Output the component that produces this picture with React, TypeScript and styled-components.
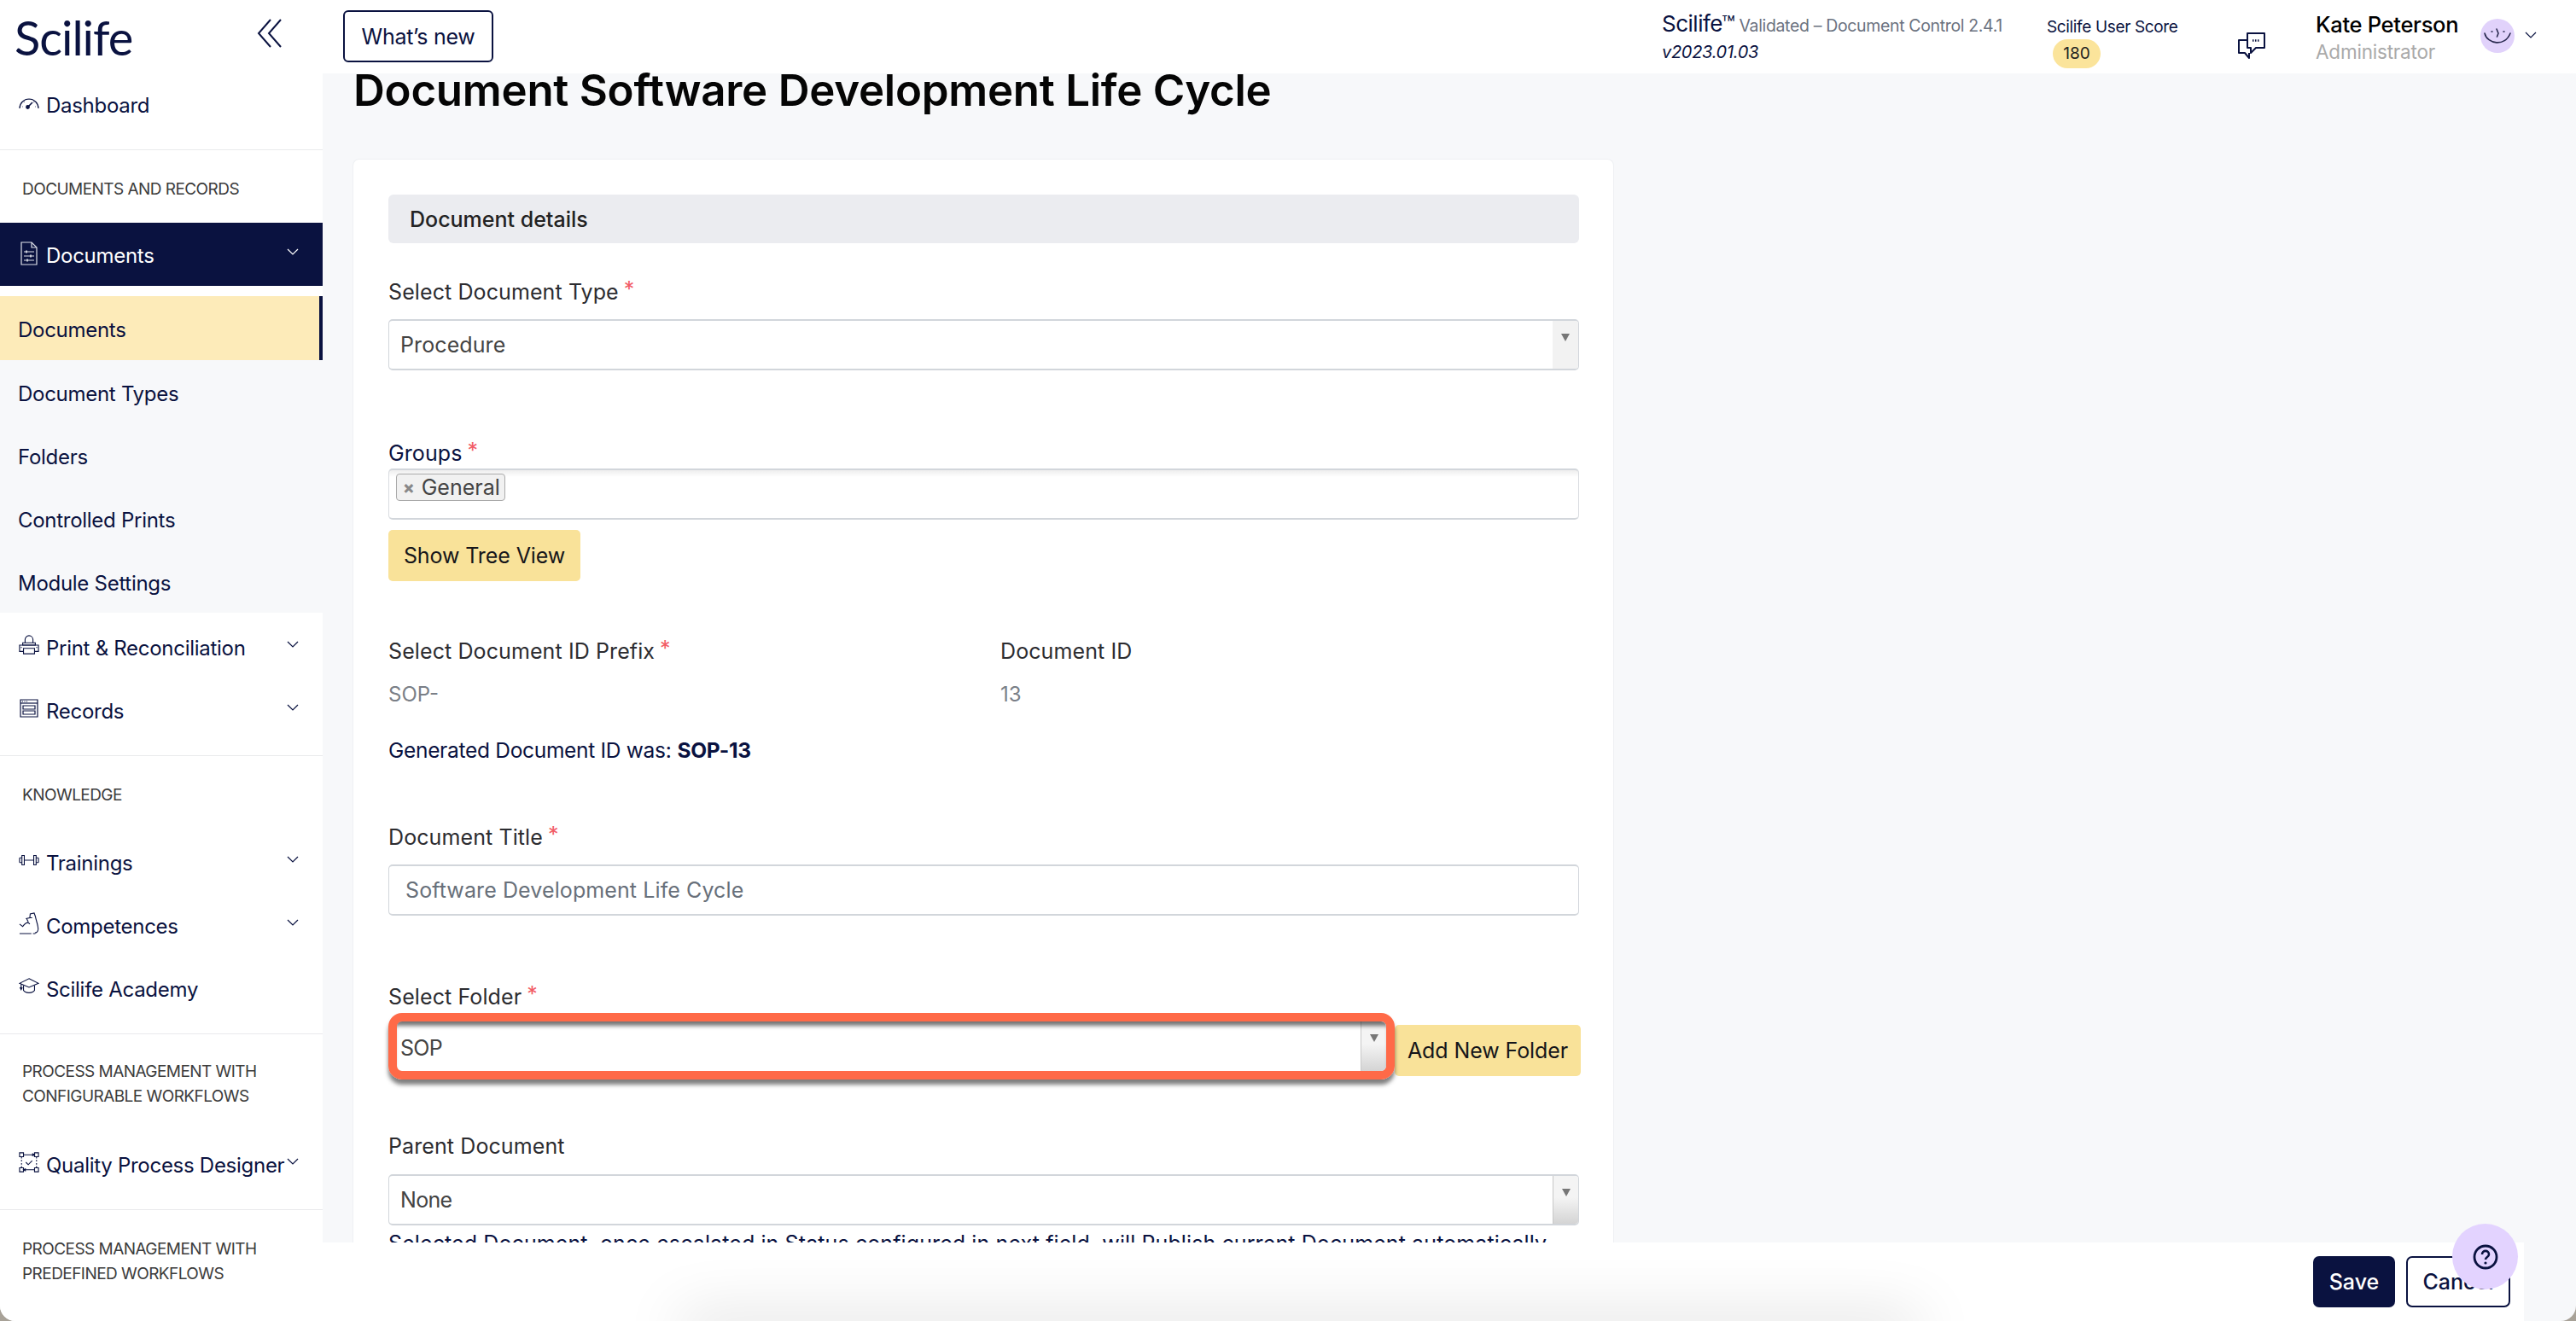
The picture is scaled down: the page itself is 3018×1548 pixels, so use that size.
import styled, { createGlobalStyle } from "styled-components";
import { ReactNode } from "react";

const navy = "#0a1240";
const yellow = "#f9e299";

const GlobalStyle = createGlobalStyle`
  html, body {
    margin: 0;
    padding: 0;
    background: #a8a298;
  }
  * {
    box-sizing: border-box;
  }
`;

const Shell = styled.div`
  position: relative;
  width: 3018px;
  height: 1548px;
  display: flex;
  flex-direction: column;
  overflow: hidden;
  border-radius: 0 0 18px 18px;
  background: #f7f8fa;
  font-family: "Inter", "Liberation Sans", sans-serif;
  color: ${navy};
`;

const TopBar = styled.header`
  height: 86px;
  flex: none;
  display: flex;
  align-items: center;
  background: #fff;
`;

const Brand = styled.div`
  width: 378px;
  height: 100%;
  flex: none;
  display: flex;
  align-items: center;
  justify-content: space-between;
  padding: 0 47px 0 17px;
`;

const Logo = styled.div`
  font-family: "Lato", sans-serif;
  font-size: 56px;
  font-weight: 400;
  line-height: 1;
  letter-spacing: -1px;
  margin-top: 2px;
  color: ${navy};
`;

const Collapse = styled.svg`
  width: 30px;
  height: 34px;
  margin-top: -9px;
`;

const WhatsNew = styled.button`
  width: 176px;
  height: 61px;
  margin: -1px 0 0 24px;
  border: 2px solid ${navy};
  border-radius: 6px;
  background: #fff;
  color: ${navy};
  font: 400 25px "Inter", sans-serif;
  letter-spacing: -0.3px;
`;

const TopRight = styled.div`
  margin-left: auto;
  display: flex;
  align-items: center;
  height: 100%;
  padding-right: 46px;
`;

const VersionBlock = styled.div`
  width: 451px;
  margin-left: 2px;
  display: flex;
  flex-direction: column;
  gap: 5px;
  margin-top: 1px;
`;

const ProductLine = styled.div`
  display: flex;
  align-items: baseline;
  gap: 5px;
  white-space: nowrap;
  font-size: 26px;
  line-height: 28px;
  letter-spacing: -0.5px;
`;

const ProductNote = styled.span`
  font-size: 19.5px;
  letter-spacing: -0.35px;
  color: #6b7280;
`;

const VersionText = styled.div`
  font-size: 20px;
  line-height: 24px;
  font-style: italic;
  letter-spacing: -0.3px;
`;

const ScoreBlock = styled.div`
  width: 223px;
  display: flex;
  flex-direction: column;
  align-items: flex-start;
  gap: 2px;
  margin-top: 13px;
`;

const ScoreTitle = styled.div`
  font-size: 19px;
  line-height: 24px;
  letter-spacing: -0.35px;
  white-space: nowrap;
`;

const ScoreBadge = styled.div`
  width: 56px;
  height: 34px;
  margin-left: 7px;
  display: flex;
  align-items: center;
  justify-content: center;
  border-radius: 17px;
  background: #fbe49b;
  font-size: 19px;
  color: #222;
`;

const ChatIcon = styled.svg`
  width: 34px;
  height: 32px;
  margin-top: 21px;
`;

const UserBlock = styled.div`
  width: 193px;
  margin-left: 58px;
  display: flex;
  flex-direction: column;
  gap: 3px;
  margin-top: 2px;
`;

const UserName = styled.div`
  font-size: 25.5px;
  line-height: 30px;
  font-weight: 500;
  color: #000;
  letter-spacing: -0.3px;
  white-space: nowrap;
`;

const UserRole = styled.div`
  font-size: 22.5px;
  line-height: 28px;
  color: #aaa;
  letter-spacing: -0.2px;
`;

const Avatar = styled.svg`
  width: 40px;
  height: 40px;
  margin-top: -2px;
`;

const Caret = styled.svg<{ $color?: string }>`
  width: 14px;
  height: 9px;
  flex: none;
  stroke: ${(p) => p.$color || navy};
`;

const AvatarCaret = styled(Caret)`
  margin: -4px 0 0 12px;
`;

const Body = styled.div`
  flex: 1;
  min-height: 0;
  display: flex;
`;

const Sidebar = styled.nav`
  width: 378px;
  flex: none;
  background: #fff;
  overflow: hidden;
`;

const NavItem = styled.div<{ $active?: boolean }>`
  height: 74px;
  display: flex;
  align-items: center;
  padding: ${(p) => (p.$active ? "3px" : "0")} 28px 0 22px;
  font-size: 24px;
  letter-spacing: -0.28px;
  white-space: nowrap;
  background: ${(p) => (p.$active ? navy : "transparent")};
  color: ${(p) => (p.$active ? "#fff" : navy)};
`;

const NavIcon = styled.span`
  width: 24px;
  height: 26px;
  flex: none;
  margin: -6px 8px 0 0;
  display: flex;
  align-items: center;
  justify-content: center;
`;

const NavLabel = styled.span`
  flex: 1;
`;

const NavCaret = styled(Caret)`
  margin-top: -8px;
`;

const SubList = styled.div`
  margin: 12px 0 4px;
  background: #f7f8fa;
`;

const SubItem = styled.div<{ $active?: boolean }>`
  height: ${(p) => (p.$active ? 75 : 74)}px;
  display: flex;
  align-items: center;
  padding: 4px 0 0 21px;
  font-size: 24px;
  letter-spacing: -0.28px;
  color: ${navy};
  background: ${(p) => (p.$active ? "#fdebb9" : "transparent")};
  border-right: ${(p) => (p.$active ? `4px solid ${navy}` : "none")};
`;

const Divider = styled.hr<{ $top: number }>`
  margin: ${(p) => p.$top}px 0 0;
  border: 0;
  border-top: 1px solid #e9eaec;
`;

const SectionLabel = styled.div<{ $top: number; $bottom: number }>`
  padding: ${(p) => p.$top}px 20px ${(p) => p.$bottom}px 26px;
  font-size: 19px;
  line-height: 29px;
  letter-spacing: -0.55px;
  color: #3c3c3c;
`;

const Main = styled.main`
  flex: 1;
  min-width: 0;
  display: flex;
  flex-direction: column;
`;

const Scroller = styled.div`
  flex: 1;
  min-height: 0;
  display: flex;
  flex-direction: column;
  padding-left: 36px;
`;

const Title = styled.h1`
  margin: 0;
  flex: none;
  font-size: 51px;
  line-height: 40px;
  font-weight: 600;
  letter-spacing: -0.25px;
  color: #050505;
  white-space: nowrap;
`;

const Card = styled.section`
  flex: 1;
  min-height: 0;
  width: 1478px;
  margin: 60px 0 0 -1px;
  padding: 41px 40px 0 41px;
  overflow: hidden;
  background: #fff;
  border: 1px solid #eef0f3;
  border-bottom: 0;
  border-radius: 8px 8px 0 0;
`;

const CardHeader = styled.div`
  height: 57px;
  display: flex;
  align-items: center;
  padding-left: 25px;
  border-radius: 6px;
  background: #ebecf0;
  font-size: 25px;
  font-weight: 500;
  letter-spacing: 0;
  color: #222;
`;

const Label = styled.div<{ $top: number; $navy?: boolean }>`
  margin-top: ${(p) => p.$top}px;
  height: 24px;
  display: flex;
  align-items: center;
  font-size: 25px;
  letter-spacing: 0.1px;
  color: ${(p) => (p.$navy ? navy : "#2c2c30")};
  white-space: nowrap;
`;

const Required = styled.span`
  margin: -6px 0 0 6px;
  color: #f25c66;
`;

const Field = styled.div<{ $top: number }>`
  position: relative;
  height: 60px;
  margin-top: ${(p) => p.$top}px;
  display: flex;
  align-items: center;
  border: 1px solid #d2d6db;
  border-top-width: 2px;
  border-bottom-width: 2px;
  border-radius: 5px;
  background: #fff;
  font-size: 25px;
  color: #444;
  overflow: hidden;
`;

const FieldText = styled.span<{ $gray?: boolean; $inset?: number; $tight?: boolean }>`
  flex: 1;
  padding-left: ${(p) => p.$inset ?? 13}px;
  color: ${(p) => (p.$gray ? "#68707a" : "#444")};
  letter-spacing: ${(p) => (p.$tight ? "-0.7px" : "0.1px")};
`;

const ArrowBox = styled.span<{ $flat?: boolean }>`
  width: 30px;
  height: 100%;
  flex: none;
  display: flex;
  justify-content: center;
  padding-top: 15px;
  border-left: ${(p) => (p.$flat ? "none" : "1px solid #c8c8c8")};
  background: ${(p) =>
    p.$flat ? "#f2f2f2" : "linear-gradient(#f4f4f4, #f4f4f4 45%, #d4d4d4)"};

  &::before {
    content: "";
    width: 0;
    height: 0;
    border-left: 5px solid transparent;
    border-right: 5px solid transparent;
    border-top: 9px solid #777;
  }
`;

const TagBox = styled.div`
  height: 60px;
  margin-top: 6px;
  padding: 4px 8px;
  border: 1px solid #d9dce0;
  border-top: 2px solid #d2d6db;
  border-bottom: 2px solid #d2d6db;
  border-radius: 5px;
  background: linear-gradient(#eeeeee, #fff 8px);
`;

const Tag = styled.span`
  display: inline-flex;
  align-items: center;
  gap: 8px;
  height: 32px;
  padding: 0 5px 0 7px;
  border: 1px solid #aaa;
  border-radius: 4px;
  background: #f1f1f1;
  font-size: 25px;
  color: #444;
`;

const TagRemove = styled.span`
  font-size: 20px;
  font-weight: 800;
  color: #888;
`;

const YellowButton = styled.button<{ $width: number }>`
  width: ${(p) => p.$width}px;
  height: 60px;
  flex: none;
  padding: 0;
  border: 0;
  border-radius: 5px;
  background: ${yellow};
  color: #16161a;
  font: 400 25px "Inter", sans-serif;
  letter-spacing: -0.1px;
  white-space: nowrap;
`;

const TreeButton = styled(YellowButton)`
  display: block;
  margin-top: 12px;
`;

const IdColumns = styled.div`
  display: grid;
  grid-template-columns: 717px 1fr;
`;

const StaticValue = styled.div`
  margin-top: 26px;
  height: 24px;
  display: flex;
  align-items: center;
  font-size: 24px;
  color: #7a7f87;
`;

const Generated = styled.div`
  margin-top: 42px;
  height: 24px;
  display: flex;
  align-items: center;
  gap: 7px;
  font-size: 24.5px;
  letter-spacing: -0.3px;
  color: ${navy};
`;

const GeneratedId = styled.strong`
  font-weight: 700;
`;

const FolderRow = styled.div`
  display: flex;
  align-items: flex-start;
  margin-top: 7px;
`;

const HighlightOuter = styled.div`
  position: relative;
  flex: none;
  width: 1179px;
  border-radius: 16px;
  box-shadow: 0 6px 5px rgba(0, 0, 0, 0.5);
`;

const Highlight = styled.div`
  position: relative;
  height: 78px;
  display: flex;
  align-items: center;
  border: 10px solid #ff6a48;
  border-radius: 16px;
  background: #fff;
  font-size: 25px;
  color: #444;
  overflow: hidden;
`;

const HighlightText = styled(FieldText)`
  padding-top: 4px;
`;

const InnerShade = styled.span`
  position: absolute;
  inset: 0;
  box-shadow: inset 0 8px 5px -3px rgba(0, 0, 0, 0.55);
  pointer-events: none;
`;

const AddFolder = styled(YellowButton)`
  margin-top: 14px;
`;

const Helper = styled.div`
  margin-top: 7px;
  font-size: 25px;
  line-height: 28px;
  letter-spacing: 0.1px;
  color: ${navy};
  white-space: nowrap;
`;

const Footer = styled.footer`
  position: relative;
  height: 92px;
  flex: none;
  margin-right: 61px;
  display: flex;
  justify-content: flex-end;
  gap: 13px;
  padding: 16px 16px 0 0;
  background: #fff;
  overflow: hidden;

  &::after {
    content: "";
    position: absolute;
    left: 420px;
    width: 1450px;
    bottom: -30px;
    height: 30px;
    box-shadow: 0 -4px 70px rgba(0, 0, 0, 0.17);
  }
`;

const FootButton = styled.button<{ $primary?: boolean; $width: number }>`
  width: ${(p) => p.$width}px;
  height: 60px;
  border: 2px solid ${navy};
  border-radius: 7px;
  background: ${(p) => (p.$primary ? navy : "#fff")};
  color: ${(p) => (p.$primary ? "#fff" : navy)};
  font: 500 25px "Inter", sans-serif;
`;

const HelpBubble = styled.div`
  position: absolute;
  left: 2873px;
  top: 1434px;
  width: 77px;
  height: 77px;
  display: flex;
  align-items: center;
  justify-content: center;
  border-radius: 50%;
  background: #e3d3ff;
`;

const NAV_STROKE = { fill: "none", stroke: navy, strokeWidth: 1.2 };

const GaugeIcon = () => (
  <svg width="24" height="16" viewBox="0 0 24 16" {...NAV_STROKE}>
    <path d="M1 15A11 11 0 0 1 23 15" />
    <path d="M4 13h.6M20 13h-.6M6 7.5l.4.4M12 4v.6M18 7.5l-.4.4" />
    <path d="M10 14l6-6" strokeWidth="1.6" />
    <circle cx="10.5" cy="13.5" r="1.8" fill={navy} />
  </svg>
);

const DocIcon = () => (
  <svg width="20" height="28" viewBox="0 0 20 28" fill="none" stroke="#dfe1ea" strokeWidth="1.2">
    <path d="M1 1h12l6 6v20H1z" />
    <path d="M13 1v6h6" />
    <path d="M4 12h12M4 17h12M4 22h12" />
    <path d="M7 10.5v3M12 15.5v3M8 20.5v3" strokeWidth="1.6" />
  </svg>
);

const PrinterIcon = () => (
  <svg width="26" height="24" viewBox="0 0 26 24" {...NAV_STROKE}>
    <path d="M8 9V5a5 5 0 0 1 10 0v4" />
    <path d="M5 9h16v3H5z" />
    <path d="M6 20H1v-8h24v8h-5" />
    <path d="M6 16h14v7H6z" />
    <path d="M2.5 15h1.5M22 15h1.5" />
  </svg>
);

const RecordsIcon = () => (
  <svg width="22" height="22" viewBox="0 0 22 22" {...NAV_STROKE}>
    <path d="M1 1h20v20H1z" />
    <path d="M1 5h20" />
    <path d="M3 3h1M5.500 3h1M8 3h1" />
    <path d="M4 8h14v4H4zM4 14h14v4H4z" />
  </svg>
);

const DumbbellIcon = () => (
  <svg width="26" height="14" viewBox="0 0 26 14" {...NAV_STROKE}>
    <path d="M1 4v6M4 1h3v12H4zM7 7h12M19 1h3v12h-3zM25 4v6" />
    <path d="M1 4h3M1 10h3M22 4h3M22 10h3" />
  </svg>
);

const ArmIcon = () => (
  <svg width="26" height="28" viewBox="0 0 26 28" {...NAV_STROKE}>
    <path d="M1 27h15M18 27h3" />
    <path d="M1 15l4 3c2-3 4-5 7-5l2 2" />
    <path d="M9 8l5-1 .5-5 5-1 1.500 4c1 6 4 12 3.500 17-.3 2-2 4-4 4" />
    <path d="M10 8l2 4M14 7h3" />
  </svg>
);

const CapIcon = () => (
  <svg width="26" height="22" viewBox="0 0 26 22" {...NAV_STROKE}>
    <path d="M13 1L25 7l-12 5L1 7z" />
    <path d="M6 10v6c2 4 12 4 14 0v-6" />
    <path d="M3 8v6M1.500 12l1.500 3 1.500-3" />
  </svg>
);

const FlowIcon = () => (
  <svg width="26" height="26" viewBox="0 0 26 26" {...NAV_STROKE}>
    <path d="M1 1h5v5H1zM20 1h5v5h-5zM1 20h5v5H1zM20 20h5v5h-5z" />
    <path d="M6 3.500h14M17 2l3 1.500-3 1.500M6 22.500h14M9 21l-3 1.500 3 1.500" />
    <path d="M3.500 6v14M22.500 6v14" strokeDasharray="2 2" />
    <path d="M9 13l3 3 5-5" />
  </svg>
);

const NavRow = ({ icon, label, expandable, active }: { icon: ReactNode; label: string; expandable?: boolean; active?: boolean }) => (
  <NavItem $active={active}>
    <NavIcon>{icon}</NavIcon>
    <NavLabel>{label}</NavLabel>
    {expandable && (
      <NavCaret $color={active ? "#fff" : navy} viewBox="0 0 14 9" fill="none" strokeWidth="1.2">
        <path d="M1 1l6 6 6-6" />
      </NavCaret>
    )}
  </NavItem>
);

const SelectField = ({ top, value, flat }: { top: number; value: string; flat?: boolean }) => (
  <Field $top={top}>
    <FieldText $tight={value === "None"}>{value}</FieldText>
    <ArrowBox $flat={flat} />
  </Field>
);

const FieldLabel = ({ top, text, required, navyText }: { top: number; text: string; required?: boolean; navyText?: boolean }) => (
  <Label $top={top} $navy={navyText}>
    {text}
    {required && <Required>*</Required>}
  </Label>
);

const App = () => {
  return (
    <Shell>
      <GlobalStyle />
      <TopBar>
        <Brand>
          <Logo>Scilife</Logo>
          <Collapse viewBox="0 0 30 34" fill="none" stroke={navy} strokeWidth="2">
            <path d="M16 1L2 17l14 16M28 1L14 17l14 16" />
          </Collapse>
        </Brand>
        <WhatsNew>What’s new</WhatsNew>
        <TopRight>
          <VersionBlock>
            <ProductLine>
              Scilife™<ProductNote>Validated – Document Control 2.4.1</ProductNote>
            </ProductLine>
            <VersionText>v2023.01.03</VersionText>
          </VersionBlock>
          <ScoreBlock>
            <ScoreTitle>Scilife User Score</ScoreTitle>
            <ScoreBadge>180</ScoreBadge>
          </ScoreBlock>
          <ChatIcon viewBox="0 0 34 32" fill="none" stroke={navy} strokeWidth="2" strokeLinejoin="round">
            <path d="M12 9H2v15h7l5 6v-6" />
            <path d="M12 1h20v17H22l-6 6v-6h-4z" fill="#fff" />
            <path d="M18 9.500h1.500M21 9.500h1.500M24 9.500h1.500" strokeWidth="2.400" />
          </ChatIcon>
          <UserBlock>
            <UserName>Kate Peterson</UserName>
            <UserRole>Administrator</UserRole>
          </UserBlock>
          <Avatar viewBox="0 0 40 40" fill="none" stroke="#2a2a50" strokeWidth="1.600" strokeLinecap="round">
            <circle cx="20" cy="20" r="20" fill="#e1d2fb" stroke="none" />
            <path d="M5 17c3 13 24 16 30 0" />
            <path d="M19 12l2 5-1.500 4" />
            <path d="M13 15h1M27 15h1" />
          </Avatar>
          <AvatarCaret viewBox="0 0 14 9" fill="none" strokeWidth="1.2">
            <path d="M1 1l6 6 6-6" />
          </AvatarCaret>
        </TopRight>
      </TopBar>
      <Body>
        <Sidebar>
          <NavRow icon={<GaugeIcon />} label="Dashboard" />
          <Divider $top={15} />
          <SectionLabel $top={31} $bottom={25}>DOCUMENTS AND RECORDS</SectionLabel>
          <NavRow icon={<DocIcon />} label="Documents" expandable active />
          <SubList>
            <SubItem $active>Documents</SubItem>
            <SubItem>Document Types</SubItem>
            <SubItem>Folders</SubItem>
            <SubItem>Controlled Prints</SubItem>
            <SubItem>Module Settings</SubItem>
          </SubList>
          <NavRow icon={<PrinterIcon />} label="Print & Reconciliation" expandable />
          <NavRow icon={<RecordsIcon />} label="Records" expandable />
          <Divider $top={15} />
          <SectionLabel $top={31} $bottom={28}>KNOWLEDGE</SectionLabel>
          <NavRow icon={<DumbbellIcon />} label="Trainings" expandable />
          <NavRow icon={<ArmIcon />} label="Competences" expandable />
          <NavRow icon={<CapIcon />} label="Scilife Academy" />
          <Divider $top={15} />
          <SectionLabel $top={29} $bottom={29}>
            PROCESS MANAGEMENT WITH
            <br />
            CONFIGURABLE WORKFLOWS
          </SectionLabel>
          <NavRow icon={<FlowIcon />} label="Quality Process Designer" expandable />
          <Divider $top={15} />
          <SectionLabel $top={31} $bottom={0}>
            PROCESS MANAGEMENT WITH
            <br />
            PREDEFINED WORKFLOWS
          </SectionLabel>
        </Sidebar>
        <Main>
          <Scroller>
            <Title>Document Software Development Life Cycle</Title>
            <Card>
              <CardHeader>Document details</CardHeader>

              <FieldLabel top={45} text="Select Document Type" required />
              <SelectField top={20} value="Procedure" flat />

              <FieldLabel top={85} text="Groups" required navyText />
              <TagBox>
                <Tag>
                  <TagRemove>×</TagRemove>General
                </Tag>
              </TagBox>
              <TreeButton $width={225}>Show Tree View</TreeButton>

              <IdColumns>
                <div>
                  <FieldLabel top={70} text="Select Document ID Prefix" required />
                  <StaticValue>SOP-</StaticValue>
                </div>
                <div>
                  <FieldLabel top={70} text="Document ID" />
                  <StaticValue>13</StaticValue>
                </div>
              </IdColumns>
              <Generated>
                Generated Document ID was: <GeneratedId>SOP-13</GeneratedId>
              </Generated>

              <FieldLabel top={78} text="Document Title" required />
              <Field $top={20}>
                <FieldText $gray $inset={19}>Software Development Life Cycle</FieldText>
              </Field>

              <FieldLabel top={83} text="Select Folder" required />
              <FolderRow>
                <HighlightOuter>
                  <Highlight>
                    <InnerShade />
                    <HighlightText $inset={4} $tight>SOP</HighlightText>
                    <ArrowBox />
                  </Highlight>
                </HighlightOuter>
                <AddFolder $width={218}>Add New Folder</AddFolder>
              </FolderRow>

              <FieldLabel top={66} text="Parent Document" />
              <SelectField top={21} value="None" />
              <Helper>Selected Document, once escalated in Status configured in next field, will Publish current Document automatically.</Helper>
            </Card>
          </Scroller>
          <Footer>
            <FootButton $primary $width={96}>Save</FootButton>
            <FootButton $width={122}>Cancel</FootButton>
          </Footer>
        </Main>
      </Body>
      <HelpBubble>
        <svg width="30" height="30" viewBox="0 0 30 30" fill="none" stroke={navy} strokeWidth="2.800">
          <circle cx="15" cy="15" r="13" />
          <path d="M11 12c0-5.500 8-5.500 8 0 0 3-4 3-4 6" strokeWidth="2.600" />
          <circle cx="15" cy="22" r="1.600" fill={navy} stroke="none" />
        </svg>
      </HelpBubble>
    </Shell>
  );
};

export default App;
